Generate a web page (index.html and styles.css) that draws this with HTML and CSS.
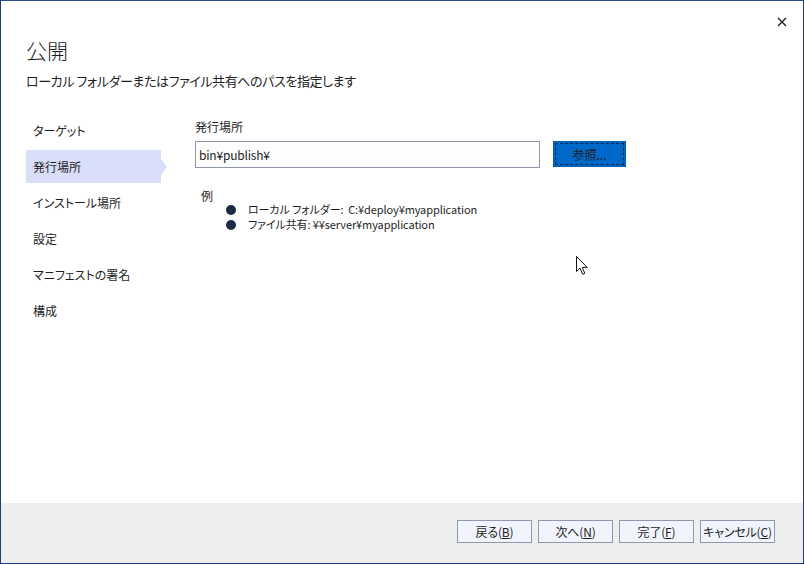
FILE: index.html
```html
<!DOCTYPE HTML>
<html lang="ja">

<head>
    <meta charset="utf-8">
    <title>公開</title>
    <link rel="stylesheet" href="styles.css">
</head>

<body>
    <div class="window">
        <div class="main">
            <button class="close" title="閉じる">
                <svg width="10" height="10" viewBox="0 0 10 10"><path d="M1 1L9 9M9 1L1 9" stroke="#1e1e1e" stroke-width="1.4"/></svg>
            </button>

            <div class="header">
                <h1>公開</h1>
                <p>ローカル フォルダーまたはファイル共有へのパスを指定します</p>
            </div>

            <div class="body">
                <!-- Wizard steps -->
                <ul class="steps">
                    <li>ターゲット</li>
                    <li class="active">発行場所</li>
                    <li>インストール場所</li>
                    <li>設定</li>
                    <li>マニフェストの署名</li>
                    <li>構成</li>
                </ul>

                <div class="content">
                    <label for="location">発行場所</label>
                    <div class="row">
                        <input type="text" id="location" value="bin¥publish¥">
                        <button class="browse">参照...</button>
                    </div>
                    <div class="examples">
                        <div class="examples-title">例</div>
                        <ul>
                            <li>ローカル フォルダー:&nbsp; C:¥deploy¥myapplication</li>
                            <li>ファイル共有: ¥¥server¥myapplication</li>
                        </ul>
                    </div>
                </div>
            </div>

            <!-- mouse pointer -->
            <svg class="cursor" width="13" height="20" viewBox="0 0 13 20">
                <path d="M0.5 0.5V15.5L4 12.2L6.6 18.3L8.8 17.4L6.3 11.4H11.2Z" fill="#fff" stroke="#111" stroke-width="1"/>
            </svg>
        </div>

        <div class="footer">
            <button><span>戻る(<u>B</u>)</span></button>
            <button><span>次へ(<u>N</u>)</span></button>
            <button><span>完了(<u>F</u>)</span></button>
            <button><span>キャンセル(<u>C</u>)</span></button>
        </div>
    </div>
</body>

</html>
```

FILE: styles.css
```css
html, body {
    margin: 0;
    padding: 0;
}

body {
    font-family: "Noto Sans CJK JP", "Noto Sans", sans-serif;
    font-feature-settings: "palt"; /* proportional kana, closer to Yu Gothic UI */
    color: #1e1e1e;
    background-color: #fff;
}

.window {
    width: 804px;
    height: 564px;
    box-sizing: border-box;
    border: 1px solid #1f3d7a;
    border-top-color: #2b4a8b;
    display: flex;
    flex-direction: column;
    background-color: #fff;
}

.main {
    flex: 1;
    position: relative; /* for close button and pointer */
}

.close {
    position: absolute;
    top: 13px;
    right: 13px;
    width: 16px;
    height: 16px;
    padding: 0;
    border: none;
    background: none;
    display: flex;
    align-items: center;
    justify-content: center;
}

.header {
    padding: 34px 0 0 25px;
}

.header h1 {
    margin: 0;
    font-size: 21px;
    font-weight: 300;
    line-height: 30px;
    color: #1e1e1e;
}

.header p {
    margin: 7px 0 0 0;
    font-size: 13px;
    line-height: 18px;
    letter-spacing: -0.4px;
}

.body {
    display: flex;
    margin-top: 24px;
}

.steps {
    list-style: none;
    margin: 0;
    padding: 0 0 0 25px;
    width: 135px;
}

.steps li {
    height: 33px;
    line-height: 33px;
    margin-bottom: 3px;
    padding-left: 7px;
    font-size: 12px;
    position: relative;
    white-space: nowrap;
}

.steps li.active {
    background-color: #d9def8;
}

.steps li.active::after {
    content: "";
    position: absolute;
    top: 9px;
    right: -6px;
    border-top: 8px solid transparent;
    border-bottom: 8px solid transparent;
    border-left: 6px solid #d9def8;
}

.content {
    padding-left: 34px;
    padding-top: 5px;
}

.content label {
    display: block;
    font-size: 12px;
    line-height: 16px;
    margin-bottom: 6px;
}

.row {
    display: flex;
    align-items: center;
    gap: 13px;
}

.row input {
    width: 345px;
    height: 27px;
    box-sizing: border-box;
    border: 1px solid #8e97a8;
    padding: 0 3px;
    font-family: inherit;
    font-feature-settings: "palt";
    font-size: 12px;
    letter-spacing: -0.2px;
    color: #1e1e1e;
    background-color: #fdfdfd;
    outline: none;
}

.browse {
    width: 73px;
    height: 26px;
    box-sizing: border-box;
    background-color: #0068c8;
    border: 1px solid #0a5aa6;
    outline: 1px dashed #0c2a55;
    outline-offset: -3px;
    color: #1e1e1e;
    font-family: inherit;
    font-feature-settings: "palt";
    font-size: 12px;
    padding: 0;
    margin-top: -1px;
}

.examples {
    margin-top: 20px;
    padding-left: 6px;
    font-size: 12px;
}

.examples-title {
    line-height: 16px;
    margin-bottom: -2px;
}

.examples ul {
    list-style: none;
    margin: 0;
    padding: 0 0 0 25px;
}

.examples li {
    font-size: 11px;
    line-height: 15px;
    letter-spacing: -0.1px;
    position: relative;
    padding-left: 22px;
    white-space: nowrap;
}

.examples li::before {
    content: "";
    position: absolute;
    left: 0;
    top: 3px;
    width: 10px;
    height: 10px;
    border-radius: 50%;
    background-color: #1c2a45;
}

.cursor {
    position: absolute;
    left: 575px;
    top: 255px;
}

.footer {
    height: 60px;
    background-color: #eeeeef;
    display: flex;
    justify-content: flex-end;
    align-items: flex-start;
    gap: 6px;
    padding: 17px 28px 0 0;
    box-sizing: border-box;
}

.footer button {
    width: 75px;
    height: 23px;
    box-sizing: border-box;
    border: 1px solid #8f98ad;
    background-color: #f1f4fd;
    color: #1e1e1e;
    font-family: inherit;
    font-feature-settings: "palt";
    font-size: 12px;
    letter-spacing: -0.2px;
    padding: 0;
    white-space: nowrap;
}
```
